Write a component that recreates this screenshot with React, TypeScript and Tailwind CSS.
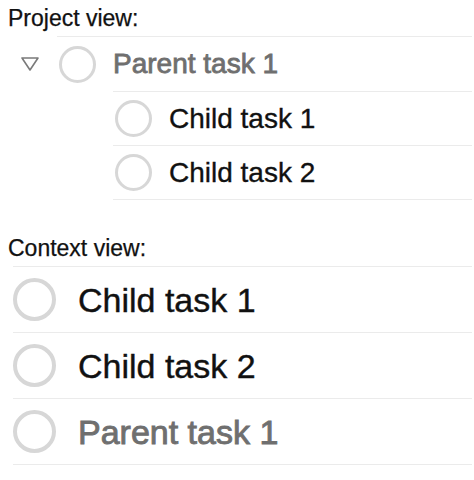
import React from "react";

interface Task {
  title: string;
  parent?: boolean;
}

const font = { fontFamily: '"Liberation Sans", Arial, sans-serif' };

// 체크 원 (작은 것 / 큰 것)
const Circle: React.FC<{ big?: boolean }> = ({ big }) =>
  big ? (
    <span className="block w-[43px] h-[43px] rounded-full border-[4px] border-[#d7d7d7] flex-shrink-0" />
  ) : (
    <span className="block w-[37px] h-[37px] rounded-full border-[3.5px] border-[#d7d7d7] flex-shrink-0" />
  );

const Disclosure: React.FC = () => (
  <svg width="20" height="16" viewBox="0 0 20 16" className="block">
    <path d="M2 2 L18 2 L10 14 Z" fill="none" stroke="#7a7a7a" strokeWidth="1.6" strokeLinejoin="round" />
  </svg>
);

const projectChildren: Task[] = [{ title: "Child task 1" }, { title: "Child task 2" }];

const contextTasks: Task[] = [
  { title: "Child task 1" },
  { title: "Child task 2" },
  { title: "Parent task 1", parent: true },
];

export default function App() {
  return (
    <div className="w-[474px] h-[480px] bg-white pr-[2px] overflow-hidden" style={font}>
      <div className="h-[36px] pt-[4px] pl-[8px] text-[23px] leading-[28px] text-[#111] [-webkit-text-stroke:0.25px_#111]">
        Project view:
      </div>

      {/* 부모 작업 */}
      <div className="flex">
        <div className="w-[57px] flex items-center justify-end pr-[17px]">
          <Disclosure />
        </div>
        <div className="flex-1 h-[55px] border-t border-[#ebebeb] flex items-center gap-[17px] pl-[2px]">
          <Circle />
          <span className="text-[28px] leading-[28px] text-[#6f6f6f] [-webkit-text-stroke:0.8px_#6f6f6f]">
            Parent task 1
          </span>
        </div>
      </div>

      {/* 하위 작업 */}
      <div className="ml-[113px] border-b border-[#ebebeb]">
        {projectChildren.map((t) => (
          <div key={t.title} className="h-[54px] border-t border-[#ebebeb] flex items-center gap-[17px] pl-[2px]">
            <Circle />
            <span className="text-[28px] leading-[28px] text-[#111] [-webkit-text-stroke:0.35px_#111]">{t.title}</span>
          </div>
        ))}
      </div>

      <div className="mt-[30px] h-[36px] pt-[4px] pl-[8px] text-[23px] leading-[28px] text-[#111] [-webkit-text-stroke:0.25px_#111]">
        Context view:
      </div>

      <div className="ml-[13px] border-b border-[#ebebeb]">
        {contextTasks.map((t) => (
          <div key={t.title} className="h-[66px] border-t border-[#ebebeb] flex items-center gap-[22px]">
            <Circle big />
            <span
              className={
                t.parent
                  ? "text-[34px] leading-[34px] text-[#6f6f6f] [-webkit-text-stroke:0.9px_#6f6f6f]"
                  : "text-[34px] leading-[34px] text-[#111] [-webkit-text-stroke:0.4px_#111]"
              }
            >
              {t.title}
            </span>
          </div>
        ))}
      </div>
    </div>
  );
}
